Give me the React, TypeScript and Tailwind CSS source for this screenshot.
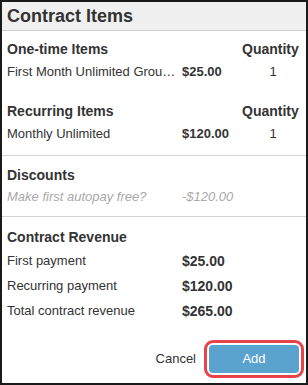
export default function App() {
  return (
    <div className="h-[385px] w-[308px] overflow-hidden bg-white font-['Liberation_Sans',Arial,sans-serif] text-[#333]">
      <div className="flex h-full flex-col border-2 border-[#1a1a1a]">
        {/* Header */}
        <div className="h-[29px] border-b border-[#cfcfcf] bg-[#f0f0f0] pl-[5px] pt-[3px] text-[18px] font-bold leading-[22px]">
          Contract Items
        </div>

        {/* One-time + Recurring */}
        <div className="pl-[5px] pr-[8px]">
          <div className="mt-[8px] grid h-[20px] grid-cols-[175px_60px_56px] text-[14px] font-bold leading-[20px]">
            <span>One-time Items</span>
            <span />
            <span className="text-right">Quantity</span>
          </div>
          <div className="mt-[3px] grid h-[20px] grid-cols-[175px_60px_56px] text-[13px] leading-[20px]">
            <span className="whitespace-nowrap">First Month Unlimited Grou…</span>
            <span className="font-bold">$25.00</span>
            <span className="pl-[6px] text-center">1</span>
          </div>

          <div className="mt-[19px] grid h-[20px] grid-cols-[175px_60px_56px] text-[14px] font-bold leading-[20px]">
            <span>Recurring Items</span>
            <span />
            <span className="text-right">Quantity</span>
          </div>
          <div className="mt-[3px] grid h-[20px] grid-cols-[175px_60px_56px] text-[13px] leading-[20px]">
            <span>Monthly Unlimited</span>
            <span className="font-bold">$120.00</span>
            <span className="pl-[6px] text-center">1</span>
          </div>
        </div>

        <div className="mt-[11px] border-t border-[#d4d4d4]" />

        {/* Discounts */}
        <div className="pl-[5px] pr-[8px]">
          <div className="mt-[9px] h-[20px] text-[14px] font-bold leading-[20px]">Discounts</div>
          <div className="mt-[2px] grid h-[20px] grid-cols-[175px_60px_56px] text-[13px] italic leading-[20px] text-[#a9a9a9]">
            <span>Make first autopay free?</span>
            <span>-$120.00</span>
            <span />
          </div>
        </div>

        <div className="mt-[9px] border-t border-[#d4d4d4]" />

        {/* Contract Revenue */}
        <div className="pl-[5px] pr-[8px]">
          <div className="mt-[10px] h-[20px] text-[14px] font-bold leading-[20px]">Contract Revenue</div>
          <div className="mt-[4px] grid h-[20px] grid-cols-[175px_60px_56px] leading-[20px]">
            <span className="text-[13px]">First payment</span>
            <span className="text-[14px] font-bold">$25.00</span>
          </div>
          <div className="mt-[5px] grid h-[20px] grid-cols-[175px_60px_56px] leading-[20px]">
            <span className="text-[13px]">Recurring payment</span>
            <span className="text-[14px] font-bold">$120.00</span>
          </div>
          <div className="mt-[5px] grid h-[20px] grid-cols-[175px_60px_56px] leading-[20px]">
            <span className="text-[13px]">Total contract revenue</span>
            <span className="text-[14px] font-bold">$265.00</span>
          </div>
        </div>

        {/* Actions */}
        <div className="mt-[24px] flex items-center justify-end gap-[13px] pr-[7px]">
          <button className="text-[13px] leading-[20px] text-[#333]">Cancel</button>
          <button className="h-[28px] w-[90px] rounded-[4px] bg-[#5ba3cf] text-[13px] leading-[28px] text-white outline-[3px] outline-offset-[2px] outline-[#e8424a] outline-solid">
            Add
          </button>
        </div>
      </div>
    </div>
  );
}
